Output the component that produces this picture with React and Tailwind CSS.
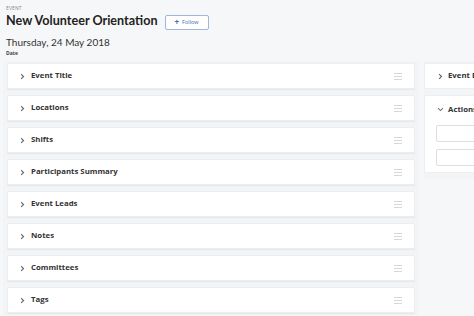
import React from "react";

const rows = ["Event Title","Locations","Shifts","Participants Summary","Event Leads","Notes","Committees","Tags"];

function Chevron({down}) {
  return (
    <svg width="7" height="7" viewBox="0 0 10 10" className="shrink-0">
      {down ? <path d="M1.5 3 L5 6.5 L8.5 3" fill="none" stroke="#777" strokeWidth="1.6"/> : <path d="M3 1.5 L6.5 5 L3 8.5" fill="none" stroke="#666" strokeWidth="1.6"/>}
    </svg>
  );
}

function Menu() {
  return (
    <svg width="8" height="7" viewBox="0 0 8 7">
      <path d="M0 0.5H8M0 3.5H8M0 6.5H8" stroke="#d6d6d6" strokeWidth="1"/>
    </svg>
  );
}

export default function App() {
  return (
    <div className="w-[474px] h-[316px] overflow-hidden bg-[#f6f7f8] text-[#222]" style={{fontFamily: '"Open Sans", sans-serif'}}>
      <div className="px-[6px] pt-[5px]">
        <div className="text-[5px] leading-[6px] text-[#888] tracking-wide">EVENT</div>
        <div className="flex items-center gap-[7px] mt-[1px]">
          <div className="text-[12.6px] leading-[18px] font-bold text-[#222] font-['Lato',sans-serif]">New Volunteer Orientation</div>
          <div className="flex items-center gap-[3px] h-[15px] px-[9px] border border-[#9db8d8] rounded-[2px] bg-white text-[5.5px] text-[#3b6fb0] mt-[2px]">
            <span className="text-[8px] leading-none font-bold">+</span>
            <span>Follow</span>
          </div>
        </div>
        <div className="text-[10px] leading-[16px] mt-[4px] text-[#333] font-['Lato',sans-serif]">Thursday, 24 May 2018</div>
        <div className="text-[5px] leading-[6px] font-bold text-[#444]">Date</div>
      </div>
      <div className="flex gap-[5px] mt-[5px] pl-[3px]">
        <div className="w-[416px] shrink-0 bg-[#f3f4f5] px-[4px] pt-[2px] pb-[4px] flex flex-col gap-[6px]">
          {rows.map((r) => (
            <div key={r} className="h-[26px] bg-white rounded-[2px] shadow-[0_1px_1px_rgba(0,0,0,0.06)] border border-[#eceef0] flex items-center pl-[11px] pr-[12px] gap-[5px]">
              <Chevron />
              <span className="text-[7.8px] font-bold text-[#333] flex-1">{r}</span>
              <Menu />
            </div>
          ))}
        </div>
        <div className="flex-1 min-w-0 bg-[#f3f4f5] pt-[2px] pb-[6px] self-start flex flex-col gap-[6px]">
          <div className="h-[26px] bg-white rounded-l-[2px] border border-r-0 border-[#eceef0] flex items-center pl-[12px] gap-[4px] whitespace-nowrap overflow-hidden">
            <Chevron />
            <span className="text-[7.8px] font-bold text-[#333]">Event Basics</span>
          </div>
          <div className="bg-white rounded-l-[2px] border border-r-0 border-[#eceef0] pl-[11px] pt-[8px] pb-[6px] overflow-hidden whitespace-nowrap">
            <div className="flex items-center gap-[4px] pl-[1px]">
              <Chevron down />
              <span className="text-[7.8px] font-bold text-[#333]">Actions</span>
            </div>
            <div className="mt-[9px] flex flex-col gap-[7px]">
              <div className="h-[17px] border border-[#ddd] rounded-[2px] w-[60px]"></div>
              <div className="h-[17px] border border-[#ddd] rounded-[2px] w-[60px]"></div>
            </div>
          </div>
        </div>
      </div>
    </div>
  );
}
